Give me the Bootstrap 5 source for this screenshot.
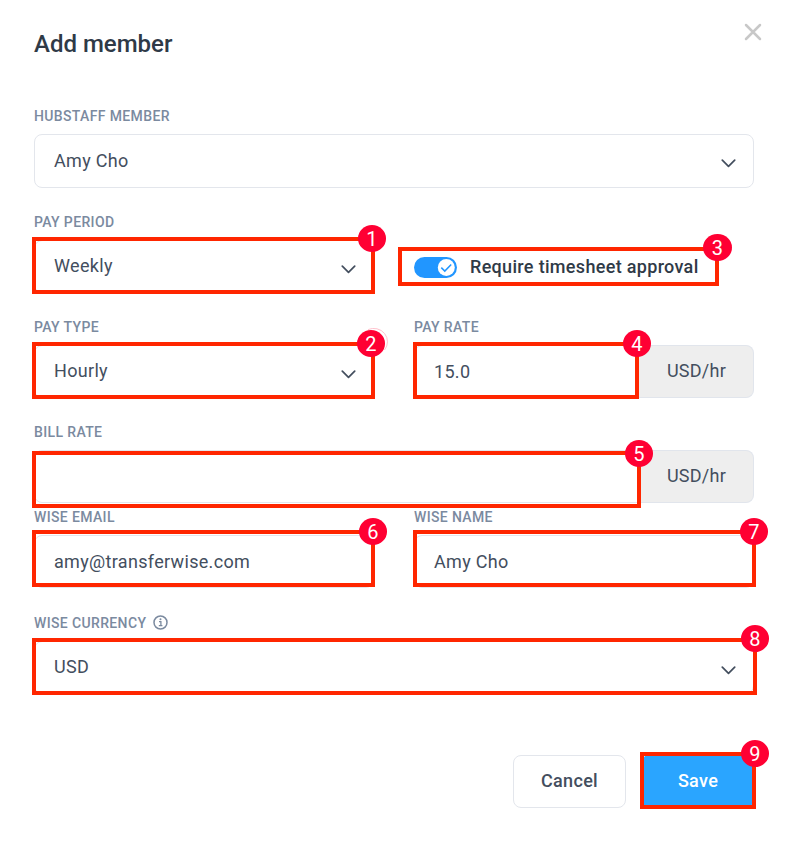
<!DOCTYPE html>
<html lang="en">
<head>
<meta charset="utf-8">
<meta name="viewport" content="width=device-width, initial-scale=1">
<title>Add member</title>
<link href="https://cdn.jsdelivr.net/npm/bootstrap@5.3.0/dist/css/bootstrap.min.css" rel="stylesheet">
<style>
body{font-family:Roboto,"Liberation Sans",sans-serif;font-size:18px;line-height:24px;letter-spacing:.32px;color:#434e5e;background:#fff;overflow:hidden}
.dialog{width:790px;height:844px;padding:30px 36px 0 34px}
.dialog-title{font-size:24px;line-height:28px;font-weight:500;color:#2f3a47;letter-spacing:0}
.close-x{width:18px;height:18px;margin:-7px -8px 0 0}
.field-label{display:flex;align-items:center;gap:7px;font-size:14px;line-height:16px;font-weight:500;letter-spacing:.36px;color:#7b8a9f;margin:0 0 10px;height:16px}
.field-label svg{margin-top:-1px}
.field{height:53px;border:1px solid #e3e6ec;border-radius:8px;padding:0 17px 0 19px;background:#fff}
.field.tall{height:54px}
.field svg{margin-top:4px}
.choice{padding-bottom:2px}
.choice svg{margin-top:7px}
.unit{width:116px;height:53px;padding:0 0 2px 2px;border:1px solid #e1e5ec;border-left:0;border-radius:0 8px 8px 0;background:#eee;letter-spacing:.25px}
.rate .field{border-radius:8px 0 0 8px}
.half{width:340px}
.r1{margin-top:50px}.r2{margin-top:26px}.r3{margin-top:26px}.r4{margin-top:26px}.r5{margin-top:6px}.r6{margin-top:27px}
.approve{height:21px;margin-top:43px;font-weight:500;color:#2f3a47;gap:13px}
.approve-text{padding-bottom:2px}
.actions{margin-top:61px;gap:15px}
.act{height:53px;width:113px;border:1px solid #e3e6ec;border-radius:8px;font-size:18px;line-height:24px;font-weight:500;letter-spacing:.32px;color:#434e5e;padding:0 0 2px}
.act.save{background:#2aa5ff;border-color:#2aa5ff;color:#fff;padding-left:1px}
.note{position:absolute;border:4px solid #ff2600;pointer-events:none;inset:-3px -1px -1px -2px}
.num{position:absolute;top:-16px;right:-15.5px;width:28.5px;height:27px;border-radius:50%;background:#ff0033;color:#fff;font-size:20px;line-height:28px;letter-spacing:0;text-align:center;font-weight:400}
.n1 .num{right:-15px}
.n2 .num{right:-14px}
.halo{position:absolute;top:-18px;right:-17px;width:29px;height:28px}
.n3{inset:-10px -20px -8px -16px}
.n3 .num{top:-17px;right:-17px}
.n4{inset:-3px -1px -1px -1px}
.n4 .num{right:-16px}
.n5{inset:1px -3px -5px -2px}
.n5 .num{top:-15px;right:-16px}
.n6{inset:-5px -1px 1px -2px}
.n6 .num{right:-16px}
.n7{inset:-5px -2px 1px -1px}
.n7 .num{right:-16px}
.n8{inset:-3px -3px -1px -2px}
.n8 .num{top:-17px;right:-16px}
.n9{inset:-3px -2px -1px -1px}
.n9 .num{right:-17px}
</style>
<script src="https://cdn.jsdelivr.net/npm/bootstrap@5.3.0/dist/js/bootstrap.bundle.min.js"></script>
</head>
<body>
<svg class="d-none"><symbol id="chev" viewBox="0 0 15 9"><path d="M1.3 1.2 7.5 7.3l6.2-6.1" fill="none" stroke="#434e5e" stroke-width="1.7" stroke-linecap="round" stroke-linejoin="round"/></symbol></svg>
<main class="dialog">
  <header class="d-flex justify-content-between align-items-start">
    <h1 class="dialog-title mb-0">Add member</h1>
    <svg class="close-x" viewBox="0 0 18 18" role="button" aria-label="Close"><path d="M2 2l14 14M16 2L2 16" fill="none" stroke="#c8c8c8" stroke-width="2.5" stroke-linecap="round"/></svg>
  </header>
  <form>
    <div class="r1">
      <div class="field-label">HUBSTAFF MEMBER</div>
      <div class="field tall d-flex align-items-center justify-content-between"><span>Amy Cho</span><svg width="15" height="9"><use href="#chev"/></svg></div>
    </div>
    <div class="r2 d-flex justify-content-between">
      <div class="half">
        <div class="field-label">PAY PERIOD</div>
        <div class="position-relative">
          <div class="field choice d-flex align-items-center justify-content-between"><span>Weekly</span><svg width="15" height="9"><use href="#chev"/></svg></div>
          <div class="note n1"><span class="num">1</span></div>
        </div>
      </div>
      <div class="half d-flex align-items-start">
        <div class="approve position-relative d-flex align-items-center">
          <svg width="43" height="21" viewBox="0 0 43 21"><rect width="43" height="21" rx="10.5" fill="#2196ff"/><circle cx="32.3" cy="10.6" r="8.5" fill="#fff"/><path d="M27.3 10.6l3.5 3.5 6.4-6.6" fill="none" stroke="#2196ff" stroke-width="1.5"/></svg>
          <span class="approve-text text-nowrap">Require timesheet approval</span>
          <div class="note n3"><span class="num">3</span></div>
        </div>
      </div>
    </div>
    <div class="r3 d-flex justify-content-between">
      <div class="half">
        <div class="field-label">PAY TYPE</div>
        <div class="position-relative">
          <div class="field choice d-flex align-items-center justify-content-between"><span>Hourly</span><svg width="15" height="9"><use href="#chev"/></svg></div>
          <div class="note n2"><svg class="halo" viewBox="0 0 29 28"><path d="M9 1.6A13.8 13.3 0 0 1 25.5 22" fill="none" stroke="#ffb3c0" stroke-width=".8"/></svg><span class="num">2</span></div>
        </div>
      </div>
      <div class="half">
        <div class="field-label">PAY RATE</div>
        <div class="rate d-flex">
          <div class="position-relative flex-grow-1">
            <div class="field d-flex align-items-center"><span>15.0</span></div>
            <div class="note n4"><span class="num">4</span></div>
          </div>
          <div class="unit d-flex align-items-center justify-content-center">USD/hr</div>
        </div>
      </div>
    </div>
    <div class="r4">
      <div class="field-label">BILL RATE</div>
      <div class="rate d-flex">
        <div class="position-relative flex-grow-1">
          <div class="field"></div>
          <div class="note n5"><span class="num">5</span></div>
        </div>
        <div class="unit d-flex align-items-center justify-content-center">USD/hr</div>
      </div>
    </div>
    <div class="r5 d-flex justify-content-between">
      <div class="half">
        <div class="field-label">WISE EMAIL</div>
        <div class="position-relative">
          <div class="field d-flex align-items-center"><span>amy@transferwise.com</span></div>
          <div class="note n6"><span class="num">6</span></div>
        </div>
      </div>
      <div class="half">
        <div class="field-label">WISE NAME</div>
        <div class="position-relative">
          <div class="field d-flex align-items-center"><span>Amy Cho</span></div>
          <div class="note n7"><span class="num">7</span></div>
        </div>
      </div>
    </div>
    <div class="r6">
      <div class="field-label">WISE CURRENCY <svg width="15" height="15" viewBox="0 0 15 15"><circle cx="7.5" cy="7.5" r="6.5" fill="none" stroke="#7b8a9f" stroke-width="1.5"/><path d="M6 6.6h1.9v3.9M5.8 10.7h3.6" fill="none" stroke="#7b8a9f" stroke-width="1.3"/><circle cx="7.5" cy="4.3" r="1" fill="#7b8a9f"/></svg></div>
      <div class="position-relative">
        <div class="field choice d-flex align-items-center justify-content-between"><span>USD</span><svg width="15" height="9"><use href="#chev"/></svg></div>
        <div class="note n8"><span class="num">8</span></div>
      </div>
    </div>
    <div class="actions d-flex justify-content-end">
      <button type="button" class="btn act">Cancel</button>
      <div class="position-relative">
        <button type="button" class="btn act save">Save</button>
        <div class="note n9"><span class="num">9</span></div>
      </div>
    </div>
  </form>
</main>
</body>
</html>
